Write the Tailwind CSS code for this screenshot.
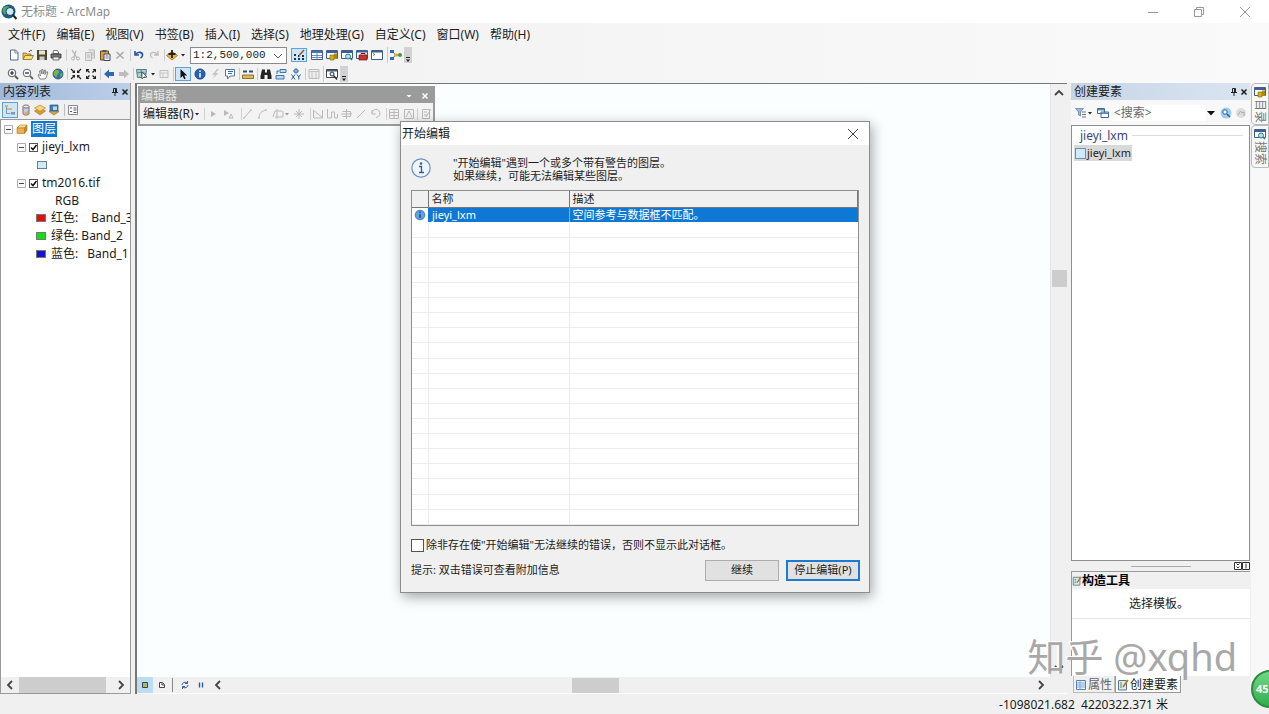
<!DOCTYPE html>
<html lang="zh-CN">
<head>
    <meta charset="UTF-8" />
    <meta name="viewport" content="width=device-width, initial-scale=1.0" />
    <title>无标题 - ArcMap</title>
    <script src="https://cdn.jsdelivr.net/npm/@tailwindcss/browser@4"></script>
</head>
<body class="h-screen overflow-hidden bg-[#f0f0f0] font-['Noto_Sans','Noto_Sans_CJK_SC',sans-serif] text-xs text-[#1c1c1c]">

<!-- Icon sprite -->
<svg class="hidden" xmlns="http://www.w3.org/2000/svg">
    <symbol id="i-new" viewBox="0 0 12 12"><path d="M2.500 1h5l2.500 2.500v7.500h-7.500z" fill="#fff" stroke="#5a6b85"/><path d="M7 1v3h3" fill="none" stroke="#5a6b85" stroke-width=".8"/></symbol>
    <symbol id="i-open" viewBox="0 0 12 12"><path d="M1 10V4h3l1 1h4v2" fill="#f3c34b" stroke="#8a6a1c" stroke-width=".8"/><path d="M1 10.500l2-4h8.500l-2 4z" fill="#ffdf7a" stroke="#8a6a1c" stroke-width=".8"/><path d="M7 3c1-2 2-2 3-1" fill="none" stroke="#444"/></symbol>
    <symbol id="i-save" viewBox="0 0 12 12"><path d="M1 1h10v10H1z" fill="#4a4a32"/><path d="M3 1.500h6v4H3z" fill="#e9e7c8"/><path d="M3.500 7.500h5V11h-5z" fill="#ccc"/></symbol>
    <symbol id="i-print" viewBox="0 0 12 12"><path d="M3.500 1.500h4l1.500 3h-6z" fill="#fff" stroke="#555" stroke-width=".8"/><path d="M1 5h10v4H1z" fill="#777" stroke="#333" stroke-width=".8"/><path d="M3 8h6v3H3z" fill="#eee" stroke="#444" stroke-width=".7"/></symbol>
    <symbol id="i-cut" viewBox="0 0 12 12"><path d="M3 1l5 8M7 2L5 8" stroke="#b5b5b5" fill="none" stroke-width="1.300"/><circle cx="4" cy="9.500" r="1.500" fill="none" stroke="#b5b5b5"/><circle cx="9" cy="9.500" r="1.500" fill="none" stroke="#b5b5b5"/></symbol>
    <symbol id="i-copy" viewBox="0 0 12 12"><path d="M1.500 3.500h6v8h-6zM4.500 1h6v8h-3" fill="#e4e4e4" stroke="#bbb"/><path d="M3 6h3M3 8h3M8 4h2M8 6h2" stroke="#bbb"/></symbol>
    <symbol id="i-paste" viewBox="0 0 12 12"><path d="M1.500 2h8v9h-8z" fill="#d3a04a" stroke="#6b4b17"/><path d="M3.500 1h4v2h-4z" fill="#555"/><path d="M5 5h6v6.500H5z" fill="#fff" stroke="#446"/><path d="M6.500 7h3M6.500 9h3" stroke="#668"/></symbol>
    <symbol id="i-del" viewBox="0 0 12 12"><path d="M2.500 3l7 6.500M9.500 3l-7 6.500" stroke="#a9a9a9" stroke-width="1.500"/></symbol>
    <symbol id="i-undo" viewBox="0 0 12 12"><path d="M2 2v4h4" fill="none" stroke="#24539b" stroke-width="1.600"/><path d="M2.500 5.500C5 2 10 3 9.500 6.500 9.300 8 8.500 8.500 7.500 9" fill="none" stroke="#24539b" stroke-width="1.600"/></symbol>
    <symbol id="i-redo" viewBox="0 0 12 12"><path d="M10 2v4H6M9.500 5.500C7 2 2 3 2.500 6.500 2.700 8 3.500 8.500 4.500 9" fill="none" stroke="#bcbcbc" stroke-width="1.300"/></symbol>
    <symbol id="i-add" viewBox="0 0 12 12"><path d="M6 2.500l5.500 4L6 11 .5 6.500z" fill="#f0b53a" stroke="#8a5e10" stroke-width=".7"/><path d="M6 1v8M2.500 5h7" stroke="#222" stroke-width="1.800"/></symbol>
    <symbol id="i-dd" viewBox="0 0 6 12"><path d="M1 5h4L3 7.500z" fill="#222"/></symbol>
    <symbol id="i-edit" viewBox="0 0 12 12"><path d="M1 10h2M5 10h2M9 10h2M1 6h2M5 7h1.500M9 7h2" stroke="#234" stroke-width="1.800"/><path d="M11 1L6.500 6" stroke="#a34d33" stroke-width="1.500"/></symbol>
    <symbol id="i-table" viewBox="0 0 12 12"><path d="M.5 1.500h11v9H.5z" fill="#fff" stroke="#3f5f92"/><path d="M1 2h10v2H1z" fill="#4775b8"/><path d="M1 6.500h10M1 8.500h10M6 4v6" stroke="#4775b8" stroke-width=".8"/></symbol>
    <symbol id="i-cat" viewBox="0 0 12 12"><path d="M.5 1.500h11v8H.5z" fill="#fff" stroke="#3f5f92"/><path d="M1 2h10v2H1z" fill="#3f5f92"/><path d="M4 6h4v5H4z" fill="#d6ae1a" stroke="#7b650c" stroke-width=".6"/><path d="M8 4.500h3V10H8z" fill="#a78a16"/></symbol>
    <symbol id="i-find" viewBox="0 0 12 12"><path d="M.5 1.500h11v8H.5z" fill="#fff" stroke="#3f5f92"/><path d="M1 2h10v2H1z" fill="#3f5f92"/><circle cx="7" cy="7.500" r="2.500" fill="#b7dfe5" stroke="#2c7f88"/><path d="M9 9l2 2" stroke="#2c7f88" stroke-width="1.300"/></symbol>
    <symbol id="i-box" viewBox="0 0 12 12"><path d="M.5 1.500h11v8H.5z" fill="#fff" stroke="#3f5f92"/><path d="M1 2h10v1.500H1z" fill="#3f5f92"/><path d="M3 6h8v5H3z" fill="#c8342b" stroke="#71150f" stroke-width=".7"/><path d="M5 5.500V4.500h4v1" stroke="#71150f" fill="none"/></symbol>
    <symbol id="i-py" viewBox="0 0 12 12"><path d="M.5 1.500h11v9H.5z" fill="#fff" stroke="#3f5f92"/><path d="M1 2h10v1.500H1z" fill="#3f5f92"/><path d="M2 4.500l2 1-2 1" fill="none" stroke="#555" stroke-width=".7"/></symbol>
    <symbol id="i-model" viewBox="0 0 12 12"><path d="M2.500 2.500l3 3.500-3 3.500M5 6h4" fill="none" stroke="#444" stroke-width=".9"/><path d="M0 1h4v3H0zM0 8h4v3H0z" fill="#2d6cb7"/><path d="M4.500 4.500h3v3h-3z" fill="#e2b321"/><circle cx="10" cy="6" r="2" fill="#3d9a43"/></symbol>
    <symbol id="i-grip" viewBox="0 0 8 16"><path d="M0 0h8v16H0z" fill="#d2d2d2"/><path d="M2 10.500h4" stroke="#222"/><path d="M2 12.500h4L4 15z" fill="#222"/></symbol>

    <symbol id="i-zin" viewBox="0 0 12 12"><circle cx="5" cy="5" r="3.800" fill="#f4f8ff" stroke="#555"/><path d="M3 5h4M5 3v4" stroke="#222" stroke-width="1.200"/><path d="M8 8l3 3" stroke="#555" stroke-width="1.800"/></symbol>
    <symbol id="i-zout" viewBox="0 0 12 12"><circle cx="5" cy="5" r="3.800" fill="#f4f8ff" stroke="#666"/><path d="M3 5h4" stroke="#222" stroke-width="1.200"/><path d="M8 8l3 3" stroke="#666" stroke-width="1.800"/></symbol>
    <symbol id="i-pan" viewBox="0 0 12 12"><path d="M3 11L1 7l1-.5 1.500 1.500L2.500 3l1-.5L5 6l-.3-4.500h1.200L6.500 6l1-4 1 .2L8 6.500l1.800-3 .9.500L9.500 9 8 11z" fill="#fff" stroke="#666" stroke-width=".8"/></symbol>
    <symbol id="i-globe" viewBox="0 0 12 12"><circle cx="6" cy="6" r="5" fill="#2e70bd" stroke="#1d3c66" stroke-width=".7"/><path d="M3 2.500c3-1 5 0 4 2S5 6 5 8s-2 1-3-1 0-4 1-4.500z" fill="#74b843"/><path d="M8 6l2.500-1-.5 3-1.500 1z" fill="#74b843"/></symbol>
    <symbol id="i-fin" viewBox="0 0 12 12"><path d="M1 1l3 3M11 1L8 4M1 11l3-3M11 11L8 8" stroke="#222" stroke-width="1.300"/><path d="M5 2v3H2zM7 2v3h3zM5 10V7H2zM7 10V7h3z" fill="#222"/></symbol>
    <symbol id="i-fout" viewBox="0 0 12 12"><path d="M2 2l2.500 2.500M10 2L7.500 4.500M2 10l2.500-2.500M10 10L7.500 7.500" stroke="#222" stroke-width="1.300"/><path d="M1 1h3.500L1 4.500zM11 1H7.500L11 4.500zM1 11V7.500L4.500 11zM11 11V7.500L7.500 11z" fill="#222"/></symbol>
    <symbol id="i-back" viewBox="0 0 12 12"><path d="M1 6l5-4.500V4h5v4H6v2.500z" fill="#2e68b5"/></symbol>
    <symbol id="i-fwd" viewBox="0 0 12 12"><path d="M11 6L6 1.500V4H1v4h5v2.500z" fill="#bdbdbd"/></symbol>
    <symbol id="i-selfeat" viewBox="0 0 12 12"><path d="M.5 1.500h10l-1 8h-8z" fill="#a8cfc9" stroke="#3f7a7a" stroke-width=".9"/><path d="M1 5l5-1 4 2M5 2l1 7" stroke="#3f7a7a" fill="none" stroke-width=".8"/><path d="M6 4v7l2-2h3z" fill="#fff" stroke="#333" stroke-width=".7"/></symbol>
    <symbol id="i-clear" viewBox="0 0 12 12"><path d="M2 2.500h8v7H2z" fill="#eee" stroke="#bcbcbc"/><path d="M2 5h8M5 5v4" stroke="#c8c8c8"/></symbol>
    <symbol id="i-arrow" viewBox="0 0 12 12"><path d="M3.500 1v9l2.200-2 1.500 3.300 1.500-.7L7.200 7.500h3z" fill="#111"/></symbol>
    <symbol id="i-info" viewBox="0 0 12 12"><circle cx="6" cy="6" r="5.200" fill="#2762b4" stroke="#153b77" stroke-width=".6"/><path d="M6 5v4.500M6 2.500v1.500" stroke="#fff" stroke-width="1.500"/></symbol>
    <symbol id="i-warn" viewBox="0 0 12 12"><circle cx="6" cy="6" r="4.800" fill="#5fa3e0" stroke="#2b6cae" stroke-width=".8"/><path d="M6 5v4M6 2.500v1.500" stroke="#16426f" stroke-width="1.300"/></symbol>
    <symbol id="i-bolt" viewBox="0 0 12 12"><path d="M8 1L3 7h3l-3 4.500L9.500 5h-3L10 1z" fill="#c4c4c4"/></symbol>
    <symbol id="i-html" viewBox="0 0 12 12"><path d="M1.500 1.500h9v6.500H6L3.500 11V8h-2z" fill="#fff" stroke="#4a78ad"/><path d="M4 3.500h5M4 5.500h4" stroke="#356ba8"/></symbol>
    <symbol id="i-measure" viewBox="0 0 12 12"><path d="M.5 7h11v3.500H.5z" fill="#e5bb55" stroke="#6f5418" stroke-width=".8"/><path d="M1 3.500h4M7 3.500h4" stroke="#2c4c7d" stroke-width="1.800"/></symbol>
    <symbol id="i-bino" viewBox="0 0 12 12"><path d="M2 1.500h3v3h2v-3h3L11.500 8v3h-4V7h-3v4h-4V8z" fill="#222"/></symbol>
    <symbol id="i-route" viewBox="0 0 12 12"><path d="M1 7.500h8v3.500H1zM5 1.500h6v3H5z" fill="#bcd9f2" stroke="#2b6ca8" stroke-width=".9"/><path d="M2 6V3h2" stroke="#2b6ca8" fill="none"/></symbol>
    <symbol id="i-xy" viewBox="0 0 12 12"><circle cx="6" cy="3" r="2" fill="none" stroke="#2b6ca8"/><path d="M6 0v5.500M3 3h6" stroke="#2b6ca8" stroke-width=".6"/><path d="M1.500 6.500l3.500 5M5 6.500l-3.500 5M7 6.500l1.800 2.500L10.500 6.500M8.800 9v2.500" stroke="#245f98" fill="none"/></symbol>
    <symbol id="i-time" viewBox="0 0 12 12"><path d="M1 1.500h10v9H1z" fill="#eee" stroke="#bbb"/><path d="M1 3.500h10M4 3.500v7M8 3.500v7" stroke="#c3c3c3"/></symbol>
    <symbol id="i-viewer" viewBox="0 0 12 12"><path d="M.5 1.500h11v8H.5z" fill="#fff" stroke="#444"/><path d="M1 2h10v1.500H1z" fill="#3f5f92"/><circle cx="6" cy="6" r="2" fill="#dfe9f5" stroke="#333"/><path d="M7.500 7.500L11 11.500" stroke="#333" stroke-width="1.500"/></symbol>

    <symbol id="i-pin" viewBox="0 0 8 8"><path d="M2.500.5h3v4h-3zM1 4.500h6M4 4.500V8" fill="none" stroke="#222"/><path d="M4.500 1v3.500" stroke="#222"/></symbol>
    <symbol id="i-x" viewBox="0 0 8 8"><path d="M1.500 1.500l5 5M6.500 1.500l-5 5" stroke="currentColor" stroke-width="1.500"/></symbol>
    <symbol id="i-check" viewBox="0 0 9 9"><path d="M2 4.500l2 2 3.500-4.500" fill="none" stroke="#111" stroke-width="1.500"/></symbol>
    <symbol id="i-tree" viewBox="0 0 12 12"><path d="M2.500 2v8M2.500 5h4M2.500 9.500h4" stroke="#789" fill="none" stroke-width=".8"/><path d="M1 1h3v2H1zM5 4h3v2H5z" fill="#e3b64e"/><path d="M7 8h4v2.500H7z" fill="#7d98b8"/></symbol>
    <symbol id="i-db" viewBox="0 0 12 12"><path d="M3 2.500v7c0 2 6 2 6 0v-7" fill="#c9cdd8" stroke="#556" stroke-width=".8"/><ellipse cx="6" cy="2.500" rx="3" ry="1.500" fill="#eee" stroke="#556" stroke-width=".8"/><path d="M4 9l4-2v3l-2 1z" fill="#e5a93b"/></symbol>
    <symbol id="i-layers" viewBox="0 0 12 12"><path d="M6 4l5.500 3L6 11 .5 7z" fill="#d99b34" stroke="#9f6a18" stroke-width=".6"/><path d="M6 1l5.500 3L6 7.500.5 4z" fill="#f8d27f" stroke="#a87723" stroke-width=".6"/></symbol>
    <symbol id="i-bysel" viewBox="0 0 12 12"><path d="M6 5l5 2.500L6 11 1 7.500z" fill="#d9a444" stroke="#8f6418" stroke-width=".6"/><path d="M2 1h8v6H2z" fill="#3c7fc0" stroke="#21538a" stroke-width=".7"/><path d="M5 2.500h4V6H5z" fill="#b9dbe9"/></symbol>
    <symbol id="i-opts" viewBox="0 0 12 12"><path d="M1.500 1.500h9v9h-9z" fill="#fff" stroke="#889"/><path d="M3 4h2M3 7.500h2M6.500 4h3M6.500 6h3M6.500 8.500h3" stroke="#556"/></symbol>
    <symbol id="i-frame" viewBox="0 0 12 12"><path d="M1 5l3-3h7l-2.500 3z" fill="#ffe19a" stroke="#a87723" stroke-width=".6"/><path d="M1 5h7.500v5.500H1z" fill="#efb04c" stroke="#a87723" stroke-width=".6"/><path d="M8.500 5L11 2v5.500l-2.500 3z" fill="#c98a2b" stroke="#a87723" stroke-width=".5"/></symbol>
    <symbol id="i-minus" viewBox="0 0 9 9"><path d="M.5.5h8v8h-8z" fill="#fafafa" stroke="#aab"/><path d="M2 4.500h5" stroke="#445"/></symbol>
    <symbol id="i-left" viewBox="0 0 10 10"><path d="M7 1L3 5l4 4" fill="none" stroke="#444" stroke-width="1.800"/></symbol>
    <symbol id="i-right" viewBox="0 0 10 10"><path d="M3 1l4 4-4 4" fill="none" stroke="#444" stroke-width="1.800"/></symbol>
    <symbol id="i-up" viewBox="0 0 10 10"><path d="M1 7l4-4 4 4" fill="none" stroke="#444" stroke-width="1.800"/></symbol>
    <symbol id="i-down" viewBox="0 0 10 10"><path d="M1 3l4 4 4-4" fill="none" stroke="#444" stroke-width="1.800"/></symbol>
    <symbol id="i-note" viewBox="0 0 12 12"><path d="M1.500 1.500h8v9.500h-8z" fill="#dceaf0" stroke="#57788a"/><path d="M3 4h2M3 6h2M3 8h2" stroke="#5a8b55"/><path d="M11 1L6 8" stroke="#b47b20" stroke-width="1.700"/></symbol>
    <symbol id="i-filter" viewBox="0 0 12 12"><path d="M.5 1.500h8l-3 3.500v4l-2-1V5z" fill="#9bbbdc" stroke="#56789c" stroke-width=".7"/><path d="M7 5h4M7 7.500h4M7 10h4" stroke="#678"/></symbol>
    <symbol id="i-tpl" viewBox="0 0 12 12"><path d="M.5 1.500h7v5h-7zM4 5h7.500v5.500H4z" fill="#fff" stroke="#446a96"/><path d="M1 2h6v1.500H1zM4.500 5.500h6.500V7H4.500z" fill="#5c88bd"/></symbol>
    <symbol id="i-props" viewBox="0 0 12 12"><path d="M1.500 1.500h9v9h-9z" fill="#e6f0fb" stroke="#5a84b5"/><path d="M2 4h8M2 6h8M2 8h8M5 2v8" stroke="#7fa6d2" stroke-width=".9"/></symbol>
</svg>

<div class="flex h-full flex-col">

    <!-- Title bar -->
    <header class="flex h-[23px] shrink-0 items-center bg-white pl-px pr-[18px]">
        <svg class="size-4" viewBox="0 0 16 16"><circle cx="7.500" cy="7.500" r="7" fill="#1d5a86"/><path d="M3 3c3-2 6-1 5 1S5 6 5 9s-2 1-3-1 0-4 1-5z" fill="#4fa85f"/><circle cx="9" cy="7.500" r="4" fill="#cdeaf3" stroke="#17405f"/><path d="M12 11l3.500 4" stroke="#222" stroke-width="2"/></svg>
        <h1 class="ml-1 text-[#8c8c8c]">无标题 - ArcMap</h1>
        <div class="ml-auto flex items-center gap-[34px] text-[#999]">
            <button aria-label="最小化"><svg class="size-3" viewBox="0 0 12 12"><path d="M1 6.500h10" stroke="currentColor"/></svg></button>
            <button aria-label="还原"><svg class="size-3" viewBox="0 0 12 12" fill="none" stroke="currentColor"><path d="M1.500 3.500h7v7h-7zM3.500 3.500v-2h7v7h-2"/></svg></button>
            <button aria-label="关闭"><svg class="size-3" viewBox="0 0 12 12"><path d="M1 1l10 10M11 1L1 11" stroke="currentColor"/></svg></button>
        </div>
    </header>

    <!-- Menu and toolbars -->
    <div class="h-[60px] shrink-0 bg-linear-to-r from-[#f0f0f0] to-[#fafafa]">
        <nav class="flex h-[22px] items-center gap-[11px] pl-2 pt-px">
            <button>文件(F)</button>
            <button>编辑(E)</button>
            <button>视图(V)</button>
            <button>书签(B)</button>
            <button>插入(I)</button>
            <button>选择(S)</button>
            <button>地理处理(G)</button>
            <button>自定义(C)</button>
            <button>窗口(W)</button>
            <button>帮助(H)</button>
        </nav>

        <div class="flex h-5 items-center gap-1 pl-2">
            <div class="flex gap-0.5">
                <button><svg class="size-3"><use href="#i-new"/></svg></button>
                <button><svg class="size-3"><use href="#i-open"/></svg></button>
                <button><svg class="size-3"><use href="#i-save"/></svg></button>
                <button><svg class="size-3"><use href="#i-print"/></svg></button>
            </div>
            <div class="flex gap-[3px] border-l border-[#ccc] pl-0.5">
                <button><svg class="size-3"><use href="#i-cut"/></svg></button>
                <button><svg class="size-3"><use href="#i-copy"/></svg></button>
                <button><svg class="size-3"><use href="#i-paste"/></svg></button>
                <button><svg class="size-3"><use href="#i-del"/></svg></button>
            </div>
            <div class="flex gap-[3px] border-l border-[#ccc] pl-0.5">
                <button><svg class="size-3"><use href="#i-undo"/></svg></button>
                <button><svg class="size-3"><use href="#i-redo"/></svg></button>
            </div>
            <div class="flex border-l border-[#ccc] pl-px">
                <button><svg class="size-3"><use href="#i-add"/></svg></button>
                <button><svg class="ml-0.5 h-3 w-1.5"><use href="#i-dd"/></svg></button>
            </div>
            <div class="relative">
                <select aria-label="比例尺" class="block h-[17px] w-[97px] appearance-none border border-[#8a8a8a] bg-white pl-0.5 font-['Liberation_Mono',monospace] text-[11px] leading-[15px]">
                    <option>1:2,500,000</option>
                </select>
                <svg class="pointer-events-none absolute right-1 top-1 size-2.5" viewBox="0 0 10 10"><path d="M1 3l4 4 4-4" fill="none" stroke="#555"/></svg>
            </div>
            <button class="border border-[#5ea2d8] bg-[#cfe6f8] px-px"><svg class="size-3"><use href="#i-edit"/></svg></button>
            <div class="flex gap-[3px]">
                <button><svg class="size-3"><use href="#i-table"/></svg></button>
                <button><svg class="size-3"><use href="#i-cat"/></svg></button>
                <button><svg class="size-3"><use href="#i-find"/></svg></button>
                <button><svg class="size-3"><use href="#i-box"/></svg></button>
                <button><svg class="size-3"><use href="#i-py"/></svg></button>
            </div>
            <div class="flex items-center gap-0.5 border-l border-[#ccc] pl-0.5">
                <button><svg class="size-3"><use href="#i-model"/></svg></button>
                <button><svg class="h-4 w-2"><use href="#i-grip"/></svg></button>
            </div>
        </div>

        <div class="flex h-[18px] items-center gap-[3px] pl-[7px]">
            <div class="flex gap-[3px]">
                <button><svg class="size-3"><use href="#i-zin"/></svg></button>
                <button><svg class="size-3"><use href="#i-zout"/></svg></button>
                <button><svg class="size-3"><use href="#i-pan"/></svg></button>
                <button><svg class="size-3"><use href="#i-globe"/></svg></button>
            </div>
            <div class="flex gap-[3px] border-l border-[#ccc] pl-0.5">
                <button><svg class="size-3"><use href="#i-fin"/></svg></button>
                <button><svg class="size-3"><use href="#i-fout"/></svg></button>
            </div>
            <div class="flex gap-[3px] border-l border-[#ccc] pl-0.5">
                <button><svg class="size-3"><use href="#i-back"/></svg></button>
                <button><svg class="size-3"><use href="#i-fwd"/></svg></button>
            </div>
            <div class="flex gap-0.5 border-l border-[#ccc] pl-0.5">
                <button><svg class="size-3"><use href="#i-selfeat"/></svg></button>
                <button><svg class="h-3 w-1.5"><use href="#i-dd"/></svg></button>
                <button><svg class="size-3"><use href="#i-clear"/></svg></button>
            </div>
            <div class="flex items-center gap-[3px] border-l border-[#ccc] pl-px">
                <button class="border border-[#5ea2d8] bg-[#cfe6f8] px-px"><svg class="size-3"><use href="#i-arrow"/></svg></button>
                <button><svg class="size-3"><use href="#i-info"/></svg></button>
                <button><svg class="size-3"><use href="#i-bolt"/></svg></button>
                <button><svg class="size-3"><use href="#i-html"/></svg></button>
            </div>
            <div class="border-l border-[#ccc] pl-0.5">
                <button class="block"><svg class="size-3"><use href="#i-measure"/></svg></button>
            </div>
            <div class="flex gap-[3px] border-l border-[#ccc] pl-0.5">
                <button><svg class="size-3"><use href="#i-bino"/></svg></button>
                <button><svg class="size-3"><use href="#i-route"/></svg></button>
                <button><svg class="size-3"><use href="#i-xy"/></svg></button>
            </div>
            <div class="border-l border-[#ccc] pl-0.5">
                <button class="block"><svg class="size-3"><use href="#i-time"/></svg></button>
            </div>
            <div class="flex items-center gap-0.5 border-l border-[#ccc] pl-0.5">
                <button><svg class="size-3"><use href="#i-viewer"/></svg></button>
                <button><svg class="h-4 w-2"><use href="#i-grip"/></svg></button>
            </div>
        </div>
    </div>

    <main class="flex min-h-0 flex-1">

        <!-- Table of contents -->
        <aside class="flex w-[131px] shrink-0 flex-col border-r border-[#9a9a9a]">
            <div class="flex h-[17px] shrink-0 items-center bg-linear-to-r from-[#9fb9da] to-[#bccfe8] pl-[3px] pr-px">
                <h2 class="mr-auto">内容列表</h2>
                <button aria-label="固定"><svg class="mr-0.5 size-2"><use href="#i-pin"/></svg></button>
                <button aria-label="关闭"><svg class="size-2"><use href="#i-x"/></svg></button>
            </div>
            <div class="flex h-[19px] shrink-0 items-center gap-0.5 pl-0.5">
                <button class="border border-[#5ea2d8] bg-[#cfe6f8] p-px"><svg class="size-3"><use href="#i-tree"/></svg></button>
                <button><svg class="size-3"><use href="#i-db"/></svg></button>
                <button><svg class="size-3"><use href="#i-layers"/></svg></button>
                <button><svg class="size-3"><use href="#i-bysel"/></svg></button>
                <div class="ml-0.5 border-l border-[#bbb] pl-0.5"><button class="block"><svg class="size-3"><use href="#i-opts"/></svg></button></div>
            </div>
            <ul class="flex-1 overflow-hidden whitespace-nowrap border-l border-t border-[#9a9a9a] bg-white leading-[18px]">
                <li class="flex h-[18px] items-center gap-[3px] pl-[3px]">
                    <svg class="size-[9px]"><use href="#i-minus"/></svg>
                    <svg class="size-3"><use href="#i-frame"/></svg>
                    <span class="h-4 bg-[#0f78d4] px-px leading-4 text-white">图层</span>
                </li>
                <li class="flex h-[18px] items-center gap-[3px] pl-4">
                    <svg class="size-[9px]"><use href="#i-minus"/></svg>
                    <span class="relative size-[9px]">
                        <input id="lyr1" type="checkbox" checked class="block size-[9px] appearance-none border border-[#555] bg-white">
                        <svg class="pointer-events-none absolute inset-0 size-[9px]"><use href="#i-check"/></svg>
                    </span>
                    <label for="lyr1" class="pl-px">jieyi_lxm</label>
                </li>
                <li class="flex h-[18px] items-center pl-9"><span class="h-2 w-2.5 border border-[#6b7f92] bg-[#cfeafb]"></span></li>
                <li class="flex h-[18px] items-center gap-[3px] pl-4">
                    <svg class="size-[9px]"><use href="#i-minus"/></svg>
                    <span class="relative size-[9px]">
                        <input id="lyr2" type="checkbox" checked class="block size-[9px] appearance-none border border-[#555] bg-white">
                        <svg class="pointer-events-none absolute inset-0 size-[9px]"><use href="#i-check"/></svg>
                    </span>
                    <label for="lyr2" class="pl-px">tm2016.tif</label>
                </li>
                <li class="h-[17px] pl-[54px] leading-[17px]">RGB</li>
                <li class="flex h-[18px] items-center gap-[5px] pl-[35px]"><span class="h-2 w-2.5 shrink-0 border border-[#777] bg-[#e01010]"></span><span>红色:</span><span class="pl-2">Band_3</span></li>
                <li class="flex h-[18px] items-center gap-[5px] pl-[35px]"><span class="h-2 w-2.5 shrink-0 border border-[#777] bg-[#12e012]"></span><span>绿色: Band_2</span></li>
                <li class="flex h-[18px] items-center gap-[5px] pl-[35px]"><span class="h-2 w-2.5 shrink-0 border border-[#777] bg-[#1414d0]"></span><span>蓝色:</span><span class="pl-1">Band_1</span></li>
            </ul>
            <div class="flex h-[17px] shrink-0 items-center justify-between border-b border-l border-[#9a9a9a] px-1">
                <svg class="size-2.5"><use href="#i-left"/></svg>
                <div class="mr-auto ml-1 h-4 w-[87px] bg-[#cdcdcd]"></div>
                <svg class="size-2.5"><use href="#i-right"/></svg>
            </div>
        </aside>

        <!-- Map view -->
        <section class="ml-1 flex min-w-0 flex-1 flex-col border-l-2 border-t border-[#777]">
            <div class="flex min-h-0 flex-1">
                <div class="flex-1 bg-[#fbfefe]"></div>
                <div class="flex w-[17px] flex-col items-center border-l border-[#e4e4e4] bg-[#f0f0f0] py-1">
                    <svg class="size-2.5"><use href="#i-up"/></svg>
                    <div class="grow-[170]"></div>
                    <div class="h-[17px] w-[15px] bg-[#cdcdcd]"></div>
                    <div class="grow-[373]"></div>
                    <svg class="size-2.5"><use href="#i-down"/></svg>
                </div>
            </div>
            <div class="flex h-[17px] shrink-0 items-center border-b border-white bg-[#f0f0f0] pr-[21px]">
                <button class="flex h-4 w-4 items-center justify-center bg-[#bcdcf4]"><svg class="size-1.5" viewBox="0 0 6 6"><path d="M.5.5h5v5h-5z" fill="#9cc06a" stroke="#444"/></svg></button>
                <button class="flex h-4 w-[18px] items-center justify-center"><svg class="size-1.5" viewBox="0 0 6 6"><path d="M.5.5h3l2 2v3h-5zM3 1v2h2" fill="#fff" stroke="#444"/></svg></button>
                <div class="ml-px h-3.5 w-px bg-[#888]"></div>
                <button class="ml-2"><svg class="size-2" viewBox="0 0 8 8" fill="none" stroke="#2c5c9b"><path d="M1 4a3 3 0 015-2M7 4a3 3 0 01-5 2M6.500 0v2.500H4M1.500 8V5.500H4"/></svg></button>
                <button class="ml-2"><svg class="size-2" viewBox="0 0 8 8"><path d="M2.500 1.500v5M5.500 1.500v5" stroke="#2c5c9b" stroke-width="1.400"/></svg></button>
                <svg class="ml-2 size-2.5"><use href="#i-left"/></svg>
                <div class="grow-[348]"></div>
                <div class="h-[15px] w-[47px] bg-[#cdcdcd]"></div>
                <div class="grow-[416]"></div>
                <svg class="size-2.5"><use href="#i-right"/></svg>
            </div>
        </section>

        <!-- Create features -->
        <aside class="ml-1 flex w-[179px] shrink-0 flex-col">
            <div class="flex h-[17px] shrink-0 items-center bg-linear-to-r from-[#c6d5e6] to-[#dae5f1] pl-[3px] pr-0.5">
                <h2 class="mr-auto">创建要素</h2>
                <button aria-label="固定"><svg class="mr-0.5 size-2"><use href="#i-pin"/></svg></button>
                <button aria-label="关闭"><svg class="size-2"><use href="#i-x"/></svg></button>
            </div>
            <div class="flex h-[25px] shrink-0 items-center bg-[#f8f8f8] pl-1">
                <button><svg class="size-3"><use href="#i-filter"/></svg></button>
                <svg class="h-3 w-1.5"><use href="#i-dd"/></svg>
                <button><svg class="ml-1 size-3"><use href="#i-tpl"/></svg></button>
                <input type="text" aria-label="搜索" placeholder="<搜索>" class="ml-1 min-w-0 flex-1 bg-white pl-px placeholder:text-[#666]">
                <svg class="h-2 w-2.5" viewBox="0 0 10 8"><path d="M1 2h8L5 6.500z" fill="#111"/></svg>
                <button><svg class="ml-1 size-3" viewBox="0 0 12 12"><circle cx="6" cy="6" r="5.500" fill="#9dcdf2"/><circle cx="5" cy="5" r="2.200" fill="#fff" stroke="#245f9e"/><path d="M7 7l3 3" stroke="#245f9e" stroke-width="1.500"/></svg></button>
                <button><svg class="mx-[3px] size-3" viewBox="0 0 12 12"><circle cx="6" cy="6" r="5" fill="#ddd"/><path d="M3 8l2.500-4L7 6l2-1v4" fill="none" stroke="#aaa"/></svg></button>
            </div>
            <div class="flex-1 border border-[#8f8f8f] bg-white">
                <div class="flex h-[19px] items-center gap-1 pl-2 pr-1.5 text-[#3a4679]">jieyi_lxm<span class="h-px flex-1 bg-[#dcdcdc]"></span></div>
                <button class="ml-0.5 flex h-4 items-center gap-px bg-[#d9d9d9] px-px text-[11px]"><span class="size-[11px] border border-[#6b8fb0] bg-[#cfeafb]"></span>jieyi_lxm</button>
            </div>
            <div class="flex h-2.5 shrink-0 items-center justify-end">
                <span class="mr-[43px] h-px w-[60px] bg-[#aaa]"></span>
                <svg class="h-2 w-4" viewBox="0 0 16 8" fill="#fff" stroke="#333"><path d="M.5.5h7v7h-7zM8.500.5h7v7h-7z"/><path d="M2.500 1.500L4 3l1.500-1.500M2.500 4.500L4 6l1.500-1.500M12 1.500v5" fill="none"/></svg>
            </div>
            <div class="h-[105px] shrink-0 border-l border-t border-[#999] bg-white">
                <h3 class="flex h-[17px] items-center bg-[#f0f0f0] font-bold text-black"><svg class="size-2.5"><use href="#i-note"/></svg>构造工具</h3>
                <p class="border-b border-[#e6e6e6] pr-1 pt-px text-center leading-7">选择模板。</p>
            </div>
            <div class="flex h-[18px] shrink-0 items-start pl-0.5">
                <button class="flex h-[17px] items-center gap-px border border-t-0 border-[#bbb] pl-px pr-0.5 pt-px text-[#666]"><svg class="size-3"><use href="#i-props"/></svg>属性</button>
                <button class="flex h-[17px] items-center gap-px border border-t-0 border-[#999] bg-white pl-px pr-0.5 pt-px"><svg class="size-3"><use href="#i-note"/></svg>创建要素</button>
            </div>
        </aside>

        <!-- Docked tabs -->
        <div class="ml-px flex w-[18px] shrink-0 flex-col bg-[#f8f8f8] text-[#777]">
            <button class="flex h-[42px] flex-col items-center gap-px rounded-l-sm border border-[#bbb] pt-0.5"><svg class="size-3 shrink-0"><use href="#i-cat"/></svg><span class="leading-3 [text-orientation:sideways] [writing-mode:vertical-rl]">目录</span></button>
            <button class="flex h-[43px] flex-col items-center gap-px rounded-l-sm border border-[#bbb] pt-0.5"><svg class="size-3 shrink-0"><use href="#i-find"/></svg><span class="leading-3 [text-orientation:sideways] [writing-mode:vertical-rl]">搜索</span></button>
        </div>
    </main>

    <!-- Status bar -->
    <footer class="flex h-5 shrink-0 items-center justify-end whitespace-pre bg-[#f0f0f0] pr-[101px] pt-0.5">-1098021.682  4220322.371 米</footer>
</div>

<!-- Floating editor toolbar -->
<div class="absolute left-[138px] top-[86px] w-[297px] border-2 border-[#9b9b9b] bg-[#f3f3f3]">
    <div class="flex h-[15px] items-center bg-[#9b9b9b] pl-px pr-1 text-[#e6e6e6]">
        <h2 class="mr-auto">编辑器</h2>
        <svg class="mr-2 size-2" viewBox="0 0 8 8"><path d="M1.500 3h5L4 5.500z" fill="#fff"/></svg>
        <button aria-label="关闭" class="text-white"><svg class="size-2"><use href="#i-x"/></svg></button>
    </div>
    <div class="flex h-[21px] items-center">
        <button class="flex items-center pl-[3px]">编辑器(R)<svg class="h-3 w-1.5"><use href="#i-dd"/></svg></button>
        <svg class="ml-1 h-4 w-[228px]" viewBox="0 0 228 16" fill="none" stroke="#b9b9b9">
            <path d="M.5 2v12M37.500 2v12M106.500 2v12M182.500 2v12M213.500 2v12" stroke="#d0d0d0"/>
            <path d="M7 5l5 3-5 3zM20 4l5 3-5 3z" fill="#b9b9b9" stroke="none"/><path d="M25 12l2-4 2 4z"/>
            <path d="M40 12l7-8M39 12h2M46 4h2M55 12c0-5 3-7 7-8M54 12h2M61 4h2M69 11l2-6h7M71 11h8v-6M73 3v10"/>
            <path d="M81 7h4l-2 2.500z" fill="#999" stroke="none"/>
            <path d="M95 3v10M90 8h10M92 5l6 6M98 5l-6 6"/>
            <path d="M109.500 4v8h9V4M109 4l10 8M123.500 3v9h4V6h3v6h3V8M142.500 3v10M138.500 5.500h8v5h-8M137 8h11M153 12l8-8M168 8a4 4 0 117 2l-3 2M168 4v4h4"/>
            <path d="M185.500 3.500h9v9h-9zM185 6.500h9M185 9.500h9M190 4v8M200.500 3.500h9v9h-9zM202 11l3-6 3 6M218.500 3.500h7v9h-7zM220 6h3M220 9h3M227 3l-5 8"/>
        </svg>
    </div>
</div>

<!-- Start editing dialog -->
<div role="dialog" aria-labelledby="dlg-title" class="absolute left-[400px] top-[121px] flex h-[472px] w-[470px] flex-col border border-[#8c8c8c] bg-[#f0f0f0] text-[11px] shadow-[2px_4px_12px_rgba(0,0,0,0.35)]">
    <div class="flex h-[23px] shrink-0 items-center justify-between bg-white pl-px pr-[11px]">
        <h2 id="dlg-title" class="text-xs">开始编辑</h2>
        <button aria-label="关闭"><svg class="size-2.5" viewBox="0 0 10 10"><path d="M0 0l10 10M10 0L0 10" stroke="#444"/></svg></button>
    </div>
    <div class="flex h-[45px] shrink-0 items-center gap-[22px] pl-2.5">
        <svg class="size-5" viewBox="0 0 20 20"><circle cx="10" cy="10" r="9.200" fill="#eef5fc" stroke="#6d92bb" stroke-width="1.200"/><path d="M8 8.500h2.500V14M8 14.500h5" fill="none" stroke="#345d8c" stroke-width="1.300"/><circle cx="10" cy="5.500" r="1.200" fill="#345d8c"/></svg>
        <p class="pt-0.5 leading-[13px]">"开始编辑"遇到一个或多个带有警告的图层。<br>如果继续，可能无法编辑某些图层。</p>
    </div>
    <div class="mx-2.5 h-[336px] shrink-0 overflow-hidden border border-[#8f8f8f] bg-white">
        <table class="h-full w-full table-fixed border-collapse text-left">
            <colgroup><col class="w-4"><col class="w-[141px]"><col></colgroup>
            <thead class="bg-[#f0f0f0]">
                <tr class="h-4 border-b border-[#777]">
                    <th class="border-r border-[#777] p-0"></th>
                    <th class="border-r border-[#777] p-0 pl-[3px] font-normal leading-[15px]">名称</th>
                    <th class="border-r border-[#777] p-0 pl-[3px] font-normal leading-[15px]">描述</th>
                </tr>
            </thead>
            <tbody id="warn-rows">
                <tr class="h-[15px] bg-[#0f78d4] text-white">
                    <td class="bg-white p-0 pl-0.5"><svg class="size-3"><use href="#i-warn"/></svg></td>
                    <td class="p-0 pl-1 leading-[14px]">jieyi_lxm</td>
                    <td class="border-l border-[#7cb4e6] p-0 pl-[3px] leading-[14px]">空间参考与数据框不匹配。</td>
                </tr>
            </tbody>
        </table>
    </div>
    <div class="mt-3 flex items-center gap-0.5 pl-2.5">
        <input id="quiet" type="checkbox" class="size-[13px] appearance-none border border-[#555] bg-white">
        <label for="quiet" class="leading-[14px]">除非存在使"开始编辑"无法继续的错误，否则不显示此对话框。</label>
    </div>
    <div class="mt-2 flex items-start pl-2.5 pr-[9px]">
        <p class="mr-auto leading-5">提示: 双击错误可查看附加信息</p>
        <button class="mr-[7px] h-[21px] w-[74px] border border-[#adadad] bg-[#e1e1e1]">继续</button>
        <button class="h-[21px] w-[74px] border-2 border-[#1d7ad0] bg-[#e1e1e1]">停止编辑(P)</button>
    </div>
</div>

<!-- Watermark -->
<div class="pointer-events-none absolute bottom-10 right-8 whitespace-nowrap text-[38px] leading-9 text-[#a8a8a8] [text-shadow:-2px_-1px_0_#fff]">知乎 @xqhd</div>

<!-- Floating progress ball -->
<div class="absolute bottom-1.5 -right-5 flex size-[38px] items-center rounded-full border-2 border-[#2c8a43] bg-linear-to-b from-[#6fd884] to-[#2fae4e] pl-[3px] text-[11px] font-bold text-white">45</div>

<script>
    // fill the grid with blank rows
    const rows = document.getElementById('warn-rows');
    for (let i = 0; i < 20; i++) {
        rows.insertAdjacentHTML('beforeend',
            '<tr class="h-[15px] border-b border-[#ececec]"><td class="border-r border-[#ececec] p-0"></td><td class="border-r border-[#ececec] p-0"></td><td class="p-0"></td></tr>');
    }
</script>
</body>
</html>
